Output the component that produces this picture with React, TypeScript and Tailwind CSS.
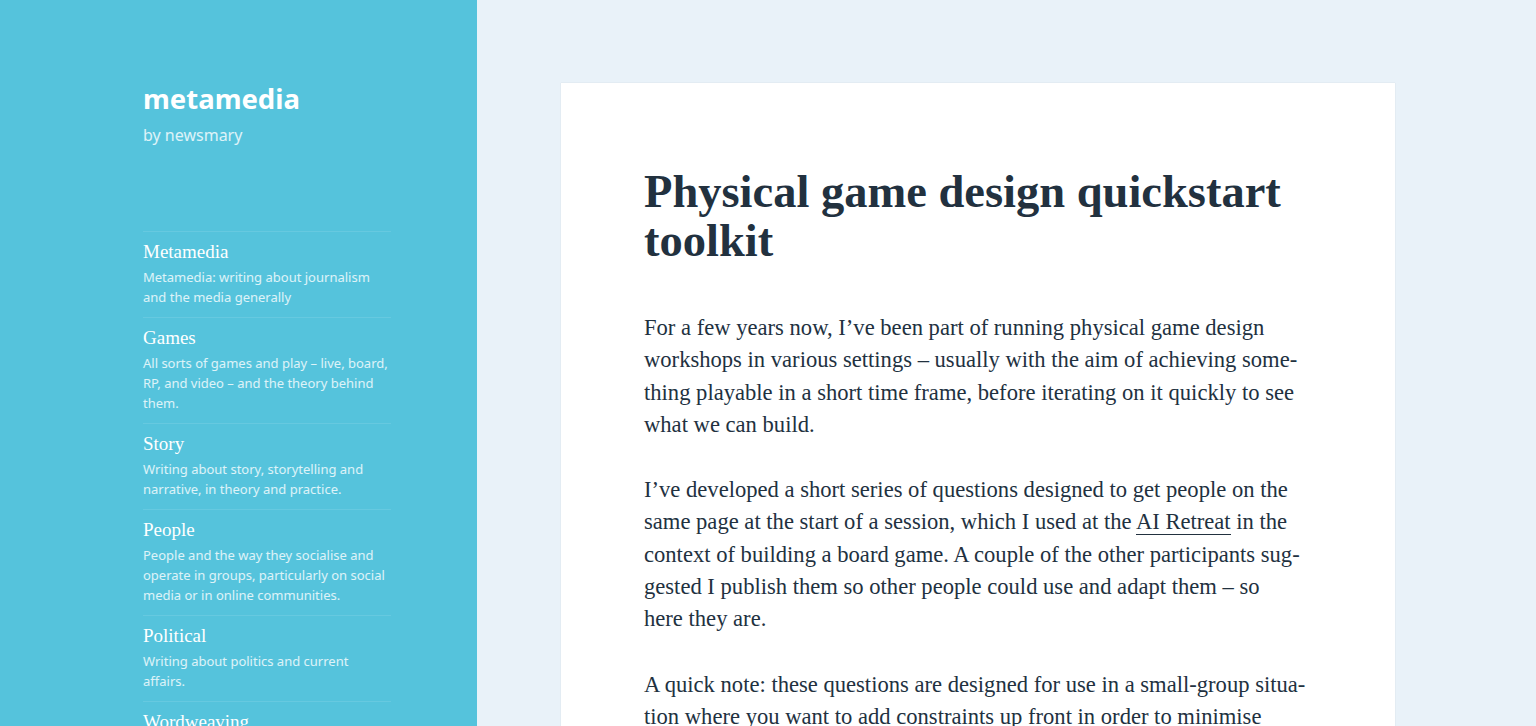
import React from "react";

const serif = "font-['Liberation_Serif',serif]";
const sans = "font-['Noto_Sans',sans-serif]";

const menu = [
  {
    title: "Metamedia",
    lines: ["Metamedia: writing about journalism", "and the media generally"],
  },
  {
    title: "Games",
    lines: [
      "All sorts of games and play – live, board,",
      "RP, and video – and the theory behind",
      "them.",
    ],
  },
  {
    title: "Story",
    lines: ["Writing about story, storytelling and", "narrative, in theory and practice."],
  },
  {
    title: "People",
    lines: [
      "People and the way they socialise and",
      "operate in groups, particularly on social",
      "media or in online communities.",
    ],
  },
  {
    title: "Political",
    lines: ["Writing about politics and current", "affairs."],
  },
  {
    title: "Wordweaving",
    lines: ["Words, language and the way we use", "them."],
  },
];

function Lines({ lines }: { lines: React.ReactNode[] }) {
  return (
    <>
      {lines.map((l, i) => (
        <span key={i} className="block whitespace-nowrap">
          {l}
        </span>
      ))}
    </>
  );
}

export default function App() {
  return (
    <div className="flex h-screen bg-[#e9f2f9] overflow-hidden">
      <aside className="w-[477px] shrink-0 bg-[#55c3dc] pl-[143px] pt-[80px]">
        <div className={`${sans} text-white`}>
          <h1 className="text-[27.5px] leading-[38px] font-bold">metamedia</h1>
          <p className="mt-[5px] text-[16px] leading-[24px] text-white/80">by newsmary</p>
        </div>
        <nav className="mt-[84px] w-[248px]">
          {menu.map((m) => (
            <div key={m.title} className="border-t border-white/10 pt-[10px] pb-[10px]">
              <div className={`${serif} text-white text-[19px] leading-[20px]`}>{m.title}</div>
              <div className={`${sans} mt-[5px] text-white/80 text-[13px] leading-[20px]`}>
                <Lines lines={m.lines} />
              </div>
            </div>
          ))}
        </nav>
      </aside>
      <main className="flex-1 pl-[84px] pt-[83px]">
        <article className="w-[834px] bg-white shadow-[0_0_1px_rgba(0,0,0,0.15)] px-[83px] pt-[84px] pb-[40px]">
          <h2 className={`${serif} font-bold text-[46.5px] leading-[49px] text-[#22313f]`}>
            <span className="block whitespace-nowrap">Physical game design quickstart</span>
            <span className="block">toolkit</span>
          </h2>
          <div className={`${serif} mt-[47px] text-[22.6px] leading-[32.3px] text-[#22313f]`}>
            <p className="mb-[33px]">
              <Lines
                lines={[
                  "For a few years now, I’ve been part of running physical game design",
                  "workshops in various settings – usually with the aim of achieving some-",
                  "thing playable in a short time frame, before iterating on it quickly to see",
                  "what we can build.",
                ]}
              />
            </p>
            <p className="mb-[33px]">
              <Lines
                lines={[
                  "I’ve developed a short series of questions designed to get people on the",
                  <>
                    same page at the start of a session, which I used at the{" "}
                    <a href="#" className="border-b border-[#22313f]">
                      AI Retreat
                    </a>{" "}
                    in the
                  </>,
                  "context of building a board game. A couple of the other participants sug-",
                  "gested I publish them so other people could use and adapt them – so",
                  "here they are.",
                ]}
              />
            </p>
            <p className="mb-[33px]">
              <Lines
                lines={[
                  "A quick note: these questions are designed for use in a small-group situa-",
                  "tion where you want to add constraints up front in order to minimise",
                  "the time spent on discussing possibilities and get to building faster.",
                ]}
              />
            </p>
          </div>
        </article>
      </main>
    </div>
  );
}
